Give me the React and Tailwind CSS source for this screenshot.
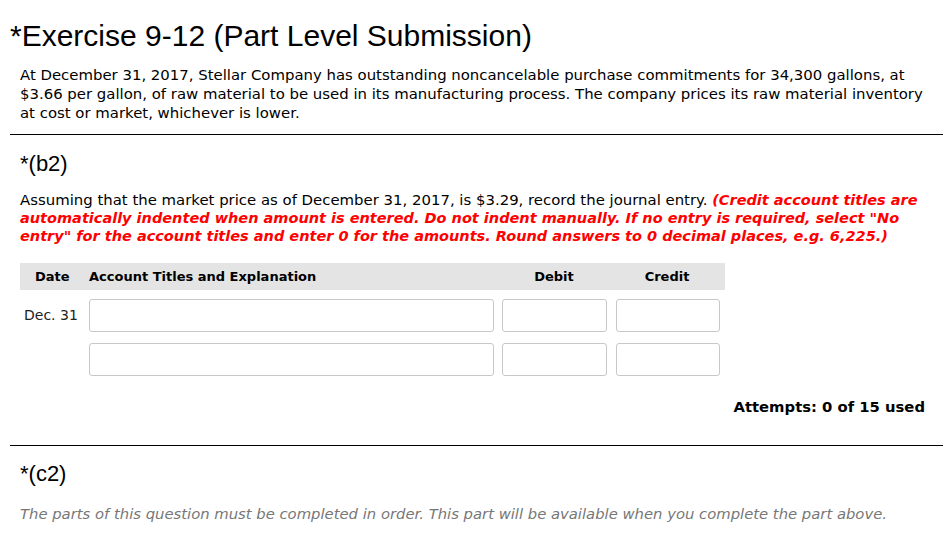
import React from 'react';

const verdana = { fontFamily: '"DejaVu Sans", Verdana, sans-serif' };

const JournalRow = ({ date }) => (
  <div className="flex items-center h-[44px]">
    <div className="w-[69px] pl-[4px] text-[14px] text-[#222]">{date}</div>
    <input className="w-[405px] h-[33px] border border-[#c8c8c8] rounded-[3px] mr-[8px] bg-white" />
    <input className="w-[105px] h-[33px] border border-[#c8c8c8] rounded-[3px] mr-[9px] bg-white" />
    <input className="w-[104px] h-[33px] border border-[#c8c8c8] rounded-[3px] bg-white" />
  </div>
);

const App = () => {
  return (
    <div className="w-[949px] h-[544px] bg-white overflow-hidden text-[#222]" style={verdana}>
      <div className="ml-[10px] w-[933px]">
        <h1 className="pt-[18px] text-[30px] leading-[36px] text-black font-['Liberation_Sans',Arial,sans-serif]">
          *Exercise 9-12 (Part Level Submission)
        </h1>

        <p className="mt-[12px] px-[10px] text-[14.9px] leading-[19px] text-black whitespace-nowrap">
          At December 31, 2017, Stellar Company has outstanding noncancelable purchase commitments for 34,300 gallons, at<br />
          $3.66 per gallon, of raw material to be used in its manufacturing process. The company prices its raw material inventory<br />
          at cost or market, whichever is lower.
        </p>

        <div className="mt-[11px] border-t border-black" />

        {/* part b2 */}
        <div className="px-[10px]">
          <h2 className="mt-[16px] text-[22px] leading-[26px] text-black font-['Liberation_Sans',Arial,sans-serif]">*(b2)</h2>
          <p className="mt-[14px] text-[14.9px] leading-[18px] text-black whitespace-nowrap">
            Assuming that the market price as of December 31, 2017, is $3.29, record the journal entry.{' '}
            <span className="text-[#ff0000] font-bold italic text-[14.5px]">
              (Credit account titles are<br />
              automatically indented when amount is entered. Do not indent manually. If no entry is required, select "No<br />
              entry" for the account titles and enter 0 for the amounts. Round answers to 0 decimal places, e.g. 6,225.)
            </span>
          </p>

          <div className="mt-[18px] w-[705px]">
            <div className="flex items-center h-[27px] bg-[#e4e4e4] text-[13px] font-bold text-black">
              <div className="w-[69px] pl-[15px]">Date</div>
              <div className="w-[405px]">Account Titles and Explanation</div>
              <div className="w-[120px] text-center">Debit</div>
              <div className="w-[106px] text-center">Credit</div>
            </div>
            <div className="pt-[3px]">
              <JournalRow date="Dec. 31" />
              <JournalRow date="" />
            </div>
          </div>

          <div className="mt-[15px] text-right pr-[8px] text-[14.8px] font-bold text-black">
            Attempts: 0 of 15 used
          </div>
        </div>

        <div className="mt-[27px] border-t border-black" />

        {/* part c2 */}
        <div className="px-[10px]">
          <h2 className="mt-[15px] text-[22px] leading-[26px] text-black font-['Liberation_Sans',Arial,sans-serif]">*(c2)</h2>
          <p className="mt-[18px] text-[14.8px] leading-[18px] italic text-[#777]">
            The parts of this question must be completed in order. This part will be available when you complete the part above.
          </p>
        </div>
      </div>
    </div>
  );
};

export default App;
